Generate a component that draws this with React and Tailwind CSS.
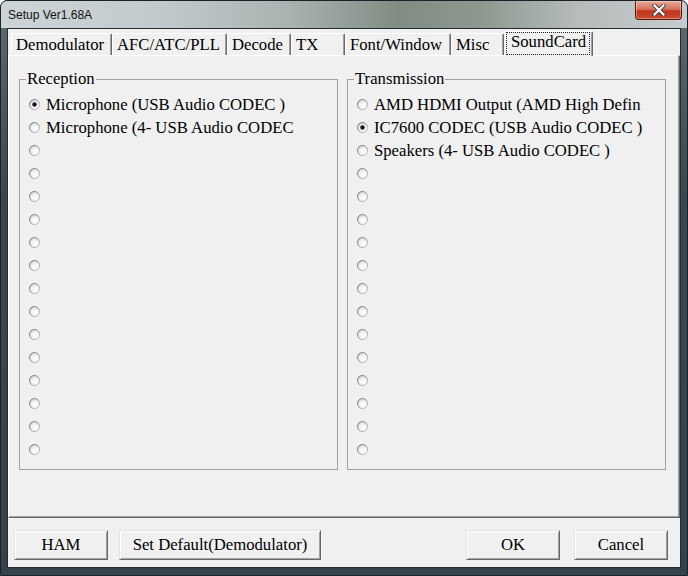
import React from "react";

function Radio({ checked }) {
  return (
    <svg width="13" height="13" viewBox="0 0 13 13" className="shrink-0">
      <defs>
        <radialGradient id="rfill" cx="60%" cy="65%" r="70%">
          <stop offset="0" stopColor="#ffffff" />
          <stop offset="0.55" stopColor="#f2f2f2" />
          <stop offset="1" stopColor="#c8c8c8" />
        </radialGradient>
        <linearGradient id="rstroke" x1="0" y1="0" x2="1" y2="1">
          <stop offset="0" stopColor="#6e6e6e" />
          <stop offset="1" stopColor="#c4c4c4" />
        </linearGradient>
      </defs>
      <circle cx="6.5" cy="6.5" r="5" fill="url(#rfill)" stroke="url(#rstroke)" strokeWidth="1" />
      {checked && <circle cx="6.5" cy="6.5" r="2.2" fill="#151515" />}
    </svg>
  );
}

function Group({ title, items, checked }) {
  return (
    <fieldset className="w-[319px] min-w-0 border border-[#a0a0a0] p-0 m-0">
      <legend className="ml-[6px] px-[1px] leading-[18px] text-[16.7px] text-black">{title}</legend>
      <div className="pt-[5px] pb-[8px] pl-[8px] flex flex-col">
        {items.map((t, i) => (
          <div key={i} className="h-[23px] flex items-center gap-[5px]">
            <Radio checked={i === checked} />
            <span className="leading-[18px] text-[16.7px] text-black whitespace-nowrap">{t}</span>
          </div>
        ))}
      </div>
    </fieldset>
  );
}

function Btn({ children, w }) {
  return (
    <div
      className={
        "h-[30px] flex items-center justify-center bg-[#f0f0f0] border border-t-[#e3e3e3] border-l-[#e3e3e3] border-r-[#696969] border-b-[#696969] shadow-[inset_1px_1px_0_#ffffff,inset_-1px_-1px_0_#a0a0a0] leading-[18px] text-[16.7px] text-black " +
        w
      }
    >
      {children}
    </div>
  );
}

export default function App() {
  const rec = ["Microphone (USB Audio CODEC )", "Microphone (4- USB Audio CODEC", ...Array(14).fill("")];
  const tx = [
    "AMD HDMI Output (AMD High Defin",
    "IC7600 CODEC (USB Audio CODEC )",
    "Speakers (4- USB Audio CODEC )",
    ...Array(13).fill(""),
  ];
  const tabs = [
    ["Demodulator", "w-[101px]"],
    ["AFC/ATC/PLL", "w-[115px]"],
    ["Decode", "w-[64px]"],
    ["TX", "w-[54px]"],
    ["Font/Window", "w-[106px]"],
    ["Misc", "w-[53px]"],
  ];
  return (
    <div className="w-[688px] h-[576px] overflow-hidden rounded-t-[7px] border border-[#1a2227] bg-[#3b4851] flex flex-col font-['Liberation_Serif','Times_New_Roman',serif]">
      {/* title bar */}
      <div className="h-[27px] shrink-0 flex justify-between items-start bg-[linear-gradient(90deg,#cdd4d8_0%,#c4cbce_22%,#aab2b1_42%,#808d83_58%,#8e988f_70%,#b5bcba_84%,#c6cccf_100%)]">
        <div className="pl-[7px] pt-[7px] leading-[14px] text-[12px] text-[#101010] font-['Liberation_Sans',Arial,sans-serif]">
          Setup Ver1.68A
        </div>
        <div className="mr-[5px] w-[47px] h-[19px] rounded-b-[4px] border border-t-0 border-[#5a1a10] bg-[linear-gradient(180deg,#e9a99a_0%,#d8745f_45%,#c2371f_55%,#c94a30_100%)] shadow-[inset_0_0_0_1px_rgba(255,255,255,0.35)] flex items-center justify-center">
          <svg width="14" height="12" viewBox="0 0 14 12">
            <path d="M2.5 1.5 L11.5 10.5 M11.5 1.5 L2.5 10.5" stroke="#3a3a3a" strokeWidth="4" strokeLinecap="square" />
            <path d="M2.5 1.5 L11.5 10.5 M11.5 1.5 L2.5 10.5" stroke="#ffffff" strokeWidth="2.2" strokeLinecap="square" />
          </svg>
        </div>
      </div>
      {/* body */}
      <div className="flex-1 px-[6px] pb-[7px] bg-[linear-gradient(180deg,#5a666c_0%,#3b4851_30%,#35424b_100%)] flex">
        <div className="flex-1 border border-[#222c33] bg-[#f0f0f0] flex flex-col">
          {/* tabs */}
          <div className="h-[26px] shrink-0 flex items-end pl-[3px]">
            {tabs.map(([t, w]) => (
              <div
                key={t}
                className={
                  "h-[22px] shrink-0 border-t border-l border-r border-t-white border-l-white border-r-[#696969] rounded-t-[2px] shadow-[inset_-1px_0_0_#a0a0a0] pl-[4px] pt-[2px] leading-[18px] text-[16.7px] text-black whitespace-nowrap overflow-hidden " +
                  w
                }
              >
                {t}
              </div>
            ))}
            <div className="ml-[1px] relative z-10 mb-[-1px] h-[25px] w-[88px] shrink-0 bg-[#f0f0f0] border-t border-l border-r border-t-white border-l-white border-r-[#696969] rounded-t-[2px] shadow-[inset_-1px_0_0_#a0a0a0]">
              <div className="h-[23px] w-[84px] border border-dotted border-[#222] pl-[4px] leading-[18px] text-[16.7px] text-black whitespace-nowrap">
                SoundCard
              </div>
            </div>
          </div>
          {/* tab panel */}
          <div className="h-[463px] shrink-0 border border-t-white border-l-white border-r-[#696969] border-b-[#696969] shadow-[inset_-1px_-1px_0_#a0a0a0] flex items-start gap-[9px] pl-[10px] pt-[14px]">
            <Group title="Reception" items={rec} checked={0} />
            <Group title="Transmission" items={tx} checked={1} />
          </div>
          {/* buttons */}
          <div className="flex justify-between pt-[12px] pl-[6px] pr-[12px]">
            <div className="flex gap-[11px]">
              <Btn w="w-[94px]">HAM</Btn>
              <Btn w="w-[202px]">Set Default(Demodulator)</Btn>
            </div>
            <div className="flex gap-[14px]">
              <Btn w="w-[94px]">OK</Btn>
              <Btn w="w-[94px]">Cancel</Btn>
            </div>
          </div>
        </div>
      </div>
    </div>
  );
}
